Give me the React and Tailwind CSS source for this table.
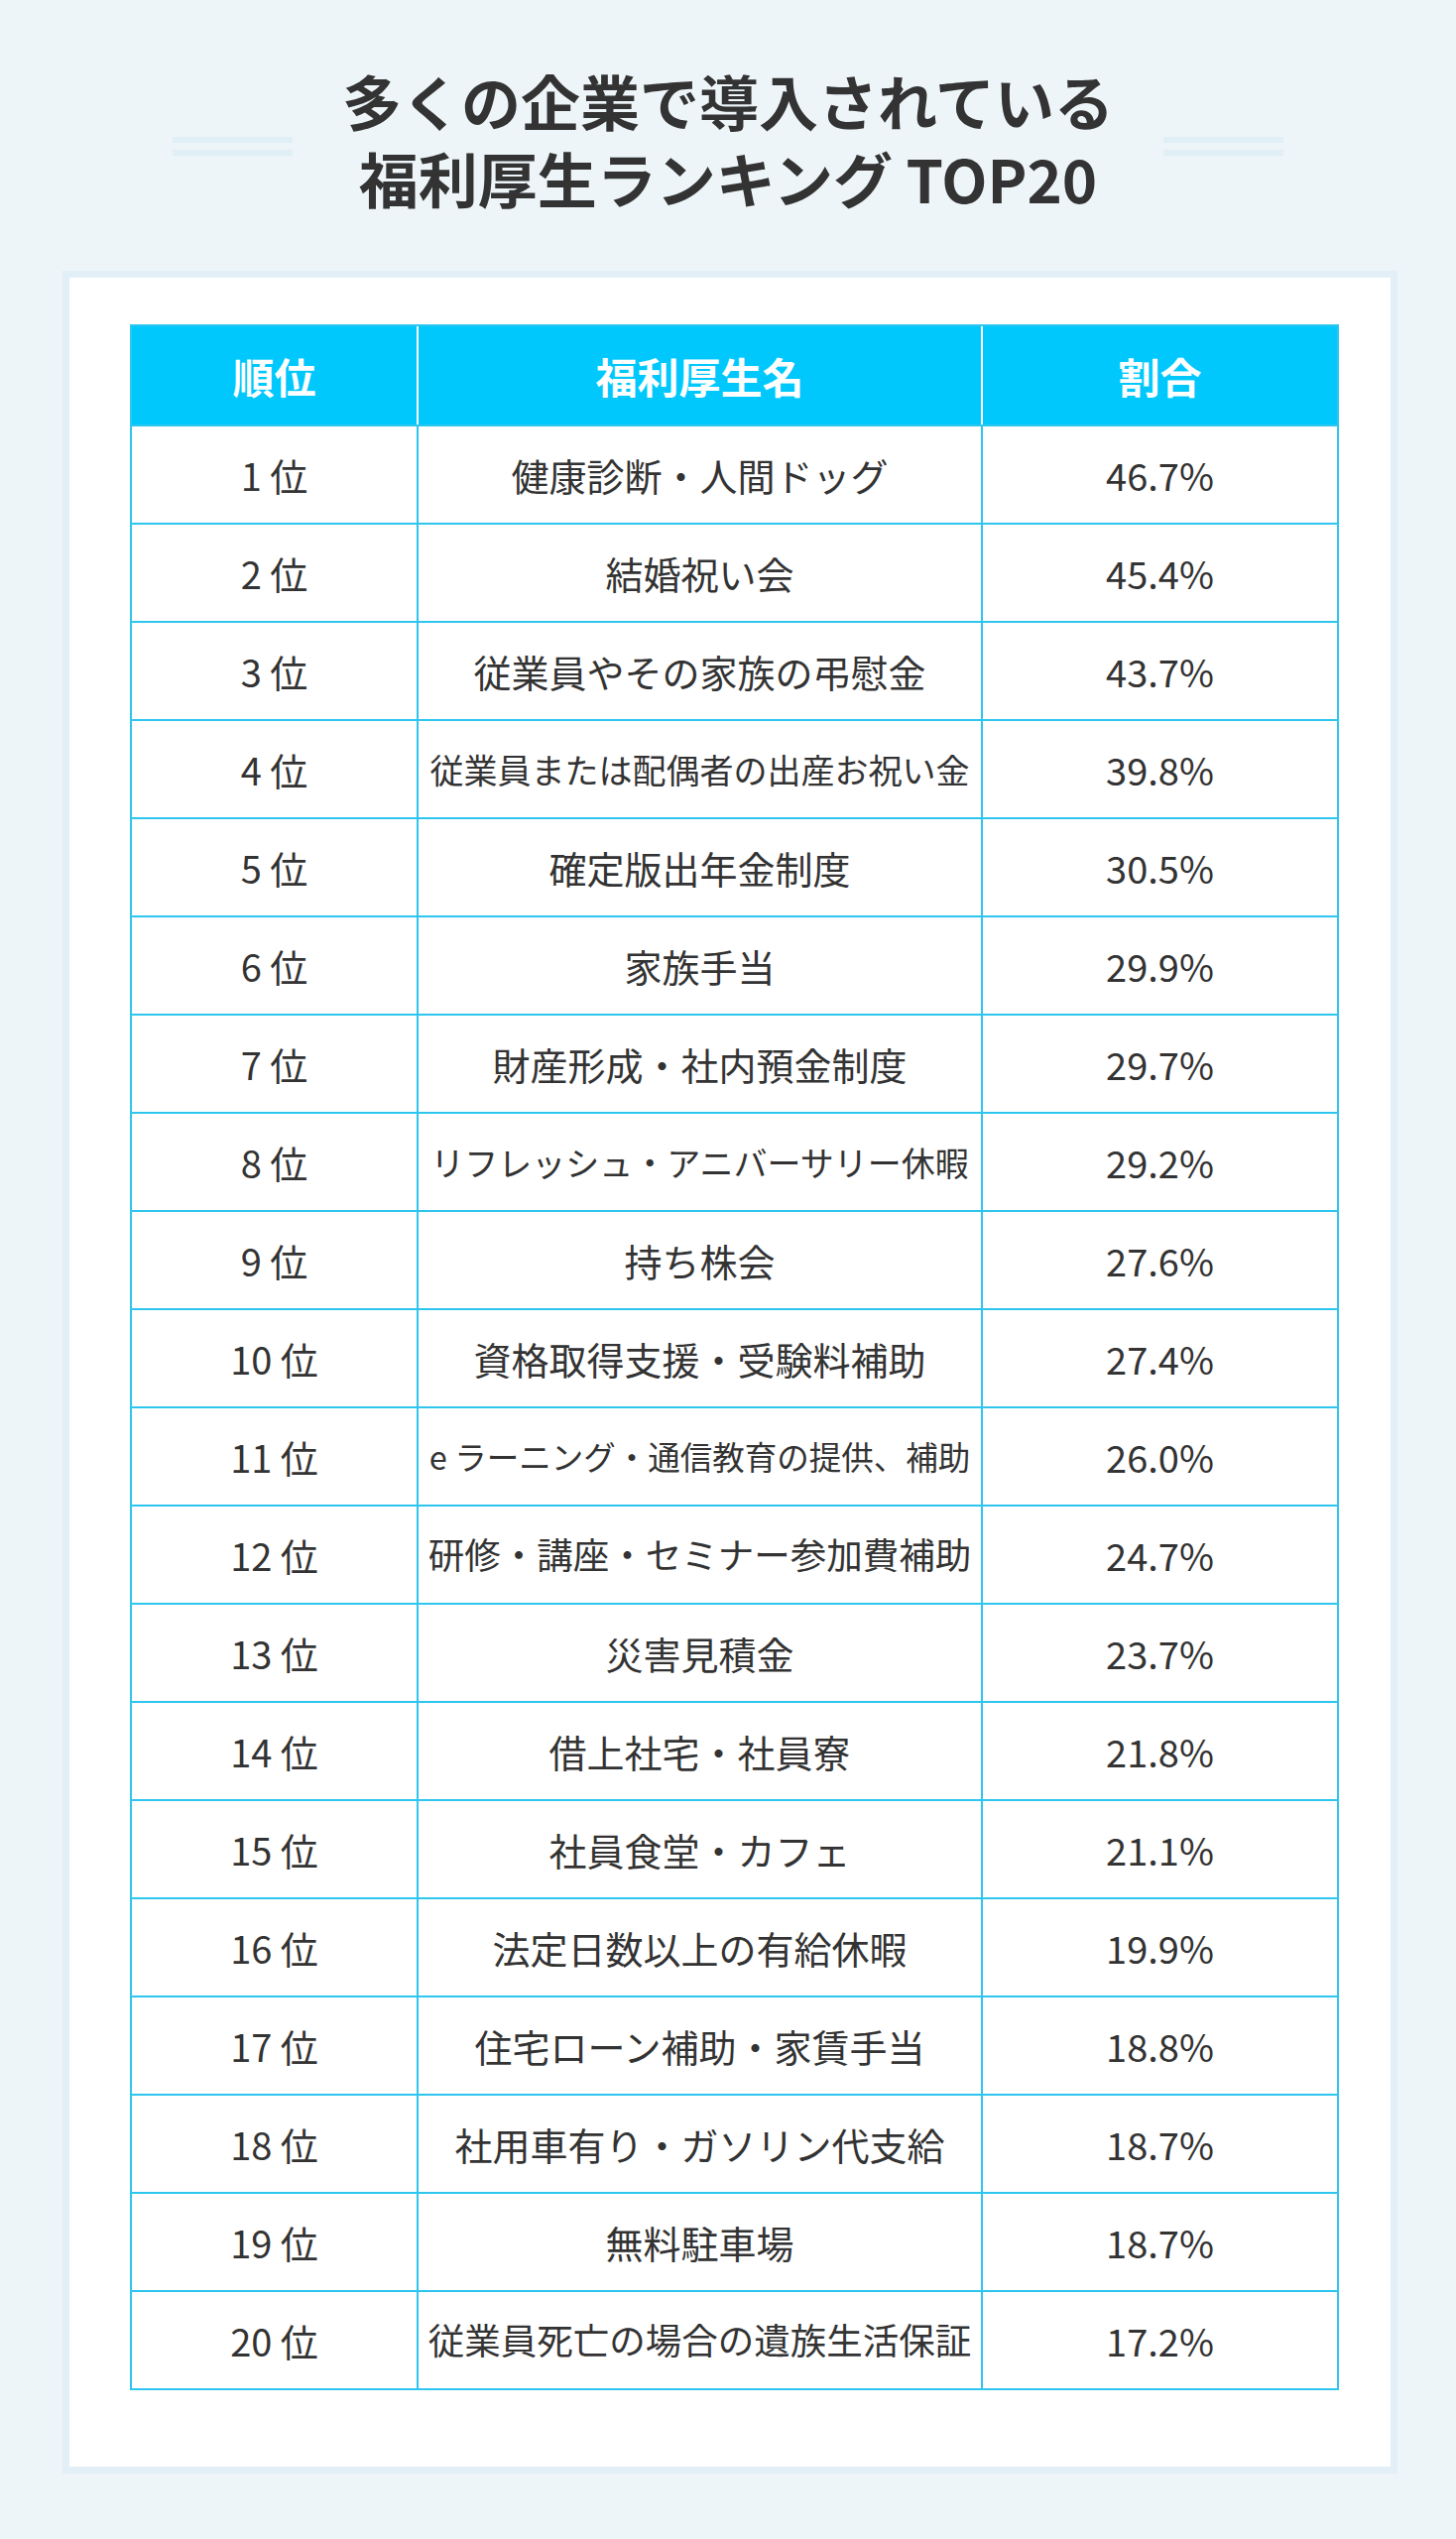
import React from 'react';

const rows = [
  { rank: '1', name: '健康診断・人間ドッグ', rate: '46.7%' },
  { rank: '2', name: '結婚祝い会', rate: '45.4%' },
  { rank: '3', name: '従業員やその家族の弔慰金', rate: '43.7%' },
  { rank: '4', name: '従業員または配偶者の出産お祝い金', rate: '39.8%', size: 'sm' },
  { rank: '5', name: '確定版出年金制度', rate: '30.5%' },
  { rank: '6', name: '家族手当', rate: '29.9%' },
  { rank: '7', name: '財産形成・社内預金制度', rate: '29.7%' },
  { rank: '8', name: 'リフレッシュ・アニバーサリー休暇', rate: '29.2%', size: 'sm' },
  { rank: '9', name: '持ち株会', rate: '27.6%' },
  { rank: '10', name: '資格取得支援・受験料補助', rate: '27.4%' },
  { rank: '11', name: 'e ラーニング・通信教育の提供、補助', rate: '26.0%', size: 'xs' },
  { rank: '12', name: '研修・講座・セミナー参加費補助', rate: '24.7%', size: 'md' },
  { rank: '13', name: '災害見積金', rate: '23.7%' },
  { rank: '14', name: '借上社宅・社員寮', rate: '21.8%' },
  { rank: '15', name: '社員食堂・カフェ', rate: '21.1%' },
  { rank: '16', name: '法定日数以上の有給休暇', rate: '19.9%' },
  { rank: '17', name: '住宅ローン補助・家賃手当', rate: '18.8%' },
  { rank: '18', name: '社用車有り・ガソリン代支給', rate: '18.7%' },
  { rank: '19', name: '無料駐車場', rate: '18.7%' },
  { rank: '20', name: '従業員死亡の場合の遺族生活保証', rate: '17.2%', size: 'md' },
];

const nameSize = {
  xs: 'text-[32.5px]',
  sm: 'text-[34px]',
  md: 'text-[36.5px]',
};

// two thin bars beside the title
const TitleBars = () => (
  <div className="flex flex-col gap-[7px] w-[121px] mt-[14px]">
    <div className="h-[6px] bg-[#e0eef5]" />
    <div className="h-[6px] bg-[#e0eef5]" />
  </div>
);

export default function App() {
  return (
    <div
      className="min-h-[2560px] w-full bg-[#edf5f9] pt-[62px] text-[#333333]"
      style={{ fontFamily: '"Noto Sans CJK JP", "Noto Sans", sans-serif' }}
    >
      <div className="flex justify-center items-center gap-[50px]">
        <TitleBars />
        <h1 className="text-[60px] leading-[78px] font-bold text-center text-[#333333]">
          多くの企業で導入されている
          <br />
          福利厚生ランキング TOP20
        </h1>
        <TitleBars />
      </div>

      <div className="ml-[63px] mt-[55px] w-[1346px] border-[7px] border-[#e2eff6] bg-white pt-[47px] pl-[61px] pb-[77px]">
        <div className="w-[1219px] border-2 border-[#2ec5ef]">
          <div className="grid grid-cols-[287px_569px_359px] h-[99px] bg-[#00c8fd] text-white font-bold text-[42px]">
            <div className="flex items-center justify-center">順位</div>
            <div className="flex items-center justify-center border-l-2 border-white">福利厚生名</div>
            <div className="flex items-center justify-center border-l-2 border-white">割合</div>
          </div>
          {rows.map((row) => (
            <div
              key={row.rank}
              className="grid grid-cols-[287px_569px_359px] h-[99px] border-t-2 border-[#2ec5ef] text-[38px]"
            >
              <div className="flex items-center justify-center">{row.rank} 位</div>
              <div
                className={`flex items-center justify-center border-l-2 border-[#2ec5ef] whitespace-nowrap ${
                  row.size ? nameSize[row.size] : ''
                }`}
              >
                {row.name}
              </div>
              <div className="flex items-center justify-center border-l-2 border-[#2ec5ef]">{row.rate}</div>
            </div>
          ))}
        </div>
      </div>
    </div>
  );
}
